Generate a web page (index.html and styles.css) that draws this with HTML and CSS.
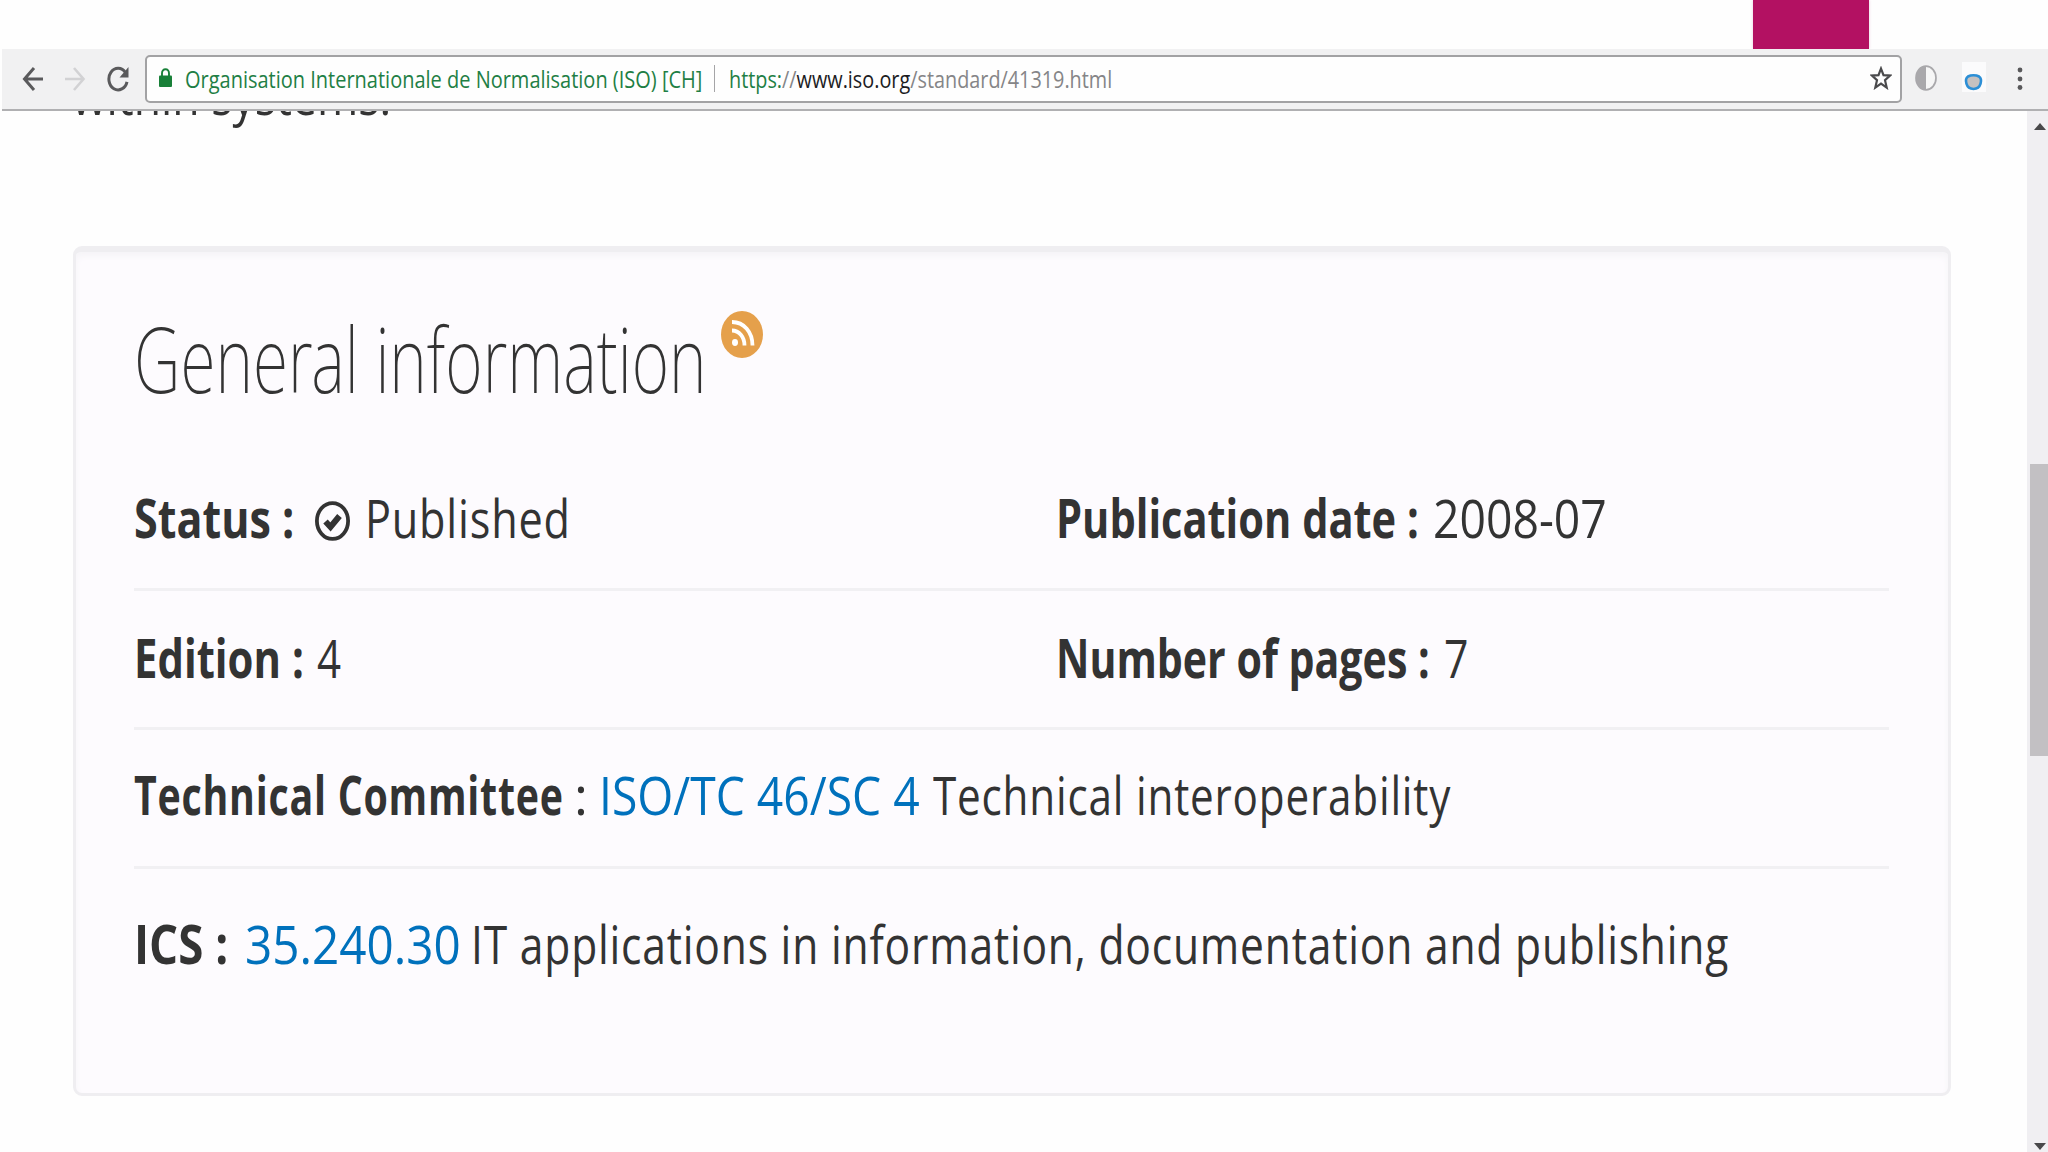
FILE: index.html
```html
<!DOCTYPE html>
<html lang="en">
<head>
    <meta charset="UTF-8">
    <meta name="viewport" content="width=device-width, initial-scale=1.0">
    <title>ISO - General information</title>
    <link rel="stylesheet" href="styles.css">
</head>
<body>

    <!-- Strip above the browser -->
    <div class="top-strip">
        <div class="accent"></div>
    </div>

    <!-- Browser toolbar -->
    <div class="toolbar">
        <svg class="nav-icon back" viewBox="0 0 22 26" fill="none" stroke="#5a5a5c" stroke-width="3">
            <path d="M21 13H2.5M12 2L2.5 13L12 24"/>
        </svg>
        <svg class="nav-icon forward" viewBox="0 0 22 26" fill="none" stroke="#d2d2d4" stroke-width="2.6">
            <path d="M1 13H19.5M10 2L19.5 13L10 24"/>
        </svg>
        <svg class="nav-icon reload" viewBox="0 0 22 26">
            <path d="M18.4 6.5A9.2 10.8 0 1 0 20 15.8" fill="none" stroke="#5a5a5c" stroke-width="3"/>
            <path d="M21.5 1V11.5H12.5Z" fill="#5a5a5c"/>
        </svg>

        <div class="address">
            <svg class="lock" viewBox="0 0 13 19">
                <path d="M3 9V5.2C3 2.7 4.4 1.2 6.5 1.2S10 2.7 10 5.2V9" fill="none" stroke="#188038" stroke-width="1.9"/>
                <rect x="0" y="7.5" width="13" height="11.5" rx="1" fill="#188038"/>
            </svg>
            <span class="text owner">Organisation Internationale de Normalisation (ISO) [CH]</span>
            <span class="divider"></span>
            <span class="text url"><span class="scheme">https:</span>//<span class="host">www.iso.org</span>/standard/41319.html</span>
            <svg class="star" viewBox="0 0 22 24">
                <path d="M11 2.6L13.5 9.2L20 9.6L15 14.2L16.7 21.6L11 17.6L5.3 21.6L7 14.2L2 9.6L8.5 9.2Z" fill="none" stroke="#4a4a4c" stroke-width="2.2"/>
            </svg>
        </div>

        <svg class="contrast" viewBox="0 0 22 26">
            <ellipse cx="11" cy="13" rx="10" ry="11.8" fill="#f6f6f6" stroke="#a9a8ab" stroke-width="1.7"/>
            <path d="M11 1.2A10 11.8 0 0 0 11 24.8Z" fill="#a9a8ab"/>
        </svg>
        <svg class="extension" viewBox="0 0 24 30">
            <rect width="24" height="30" fill="#fbfbfc"/>
            <path d="M6 14.5C9 12.8 14 12.8 17 14.5C20.5 17 19.5 27 11.5 27S2.5 17 6 14.5Z" fill="#c5c1c0" stroke="#2c8fd6" stroke-width="2.6"/>
        </svg>
        <svg class="menu" viewBox="0 0 6 24" fill="#58585a">
            <circle cx="3" cy="3" r="2.4"/>
            <circle cx="3" cy="12" r="2.4"/>
            <circle cx="3" cy="20.5" r="2.4"/>
        </svg>
    </div>

    <div class="viewport">
        <div class="page">
            <!-- Last line of the abstract, scrolled under the toolbar -->
            <div class="abstract"><span class="text abstract-text">within systems.</span></div>

            <div class="card">
                <div class="card-title">
                    <h2 class="text title">General information</h2>
                    <svg class="rss" viewBox="0 0 42 47">
                        <ellipse cx="21" cy="23.5" rx="21" ry="23.5" fill="#e5a04b"/>
                        <ellipse cx="14" cy="31.5" rx="3" ry="3.4" fill="#fff"/>
                        <path d="M11 19.5C18 19.5 23.5 26 23.5 34.5M11 11C23 11 31.5 21 31.5 34.5" fill="none" stroke="#fff" stroke-width="3.8"/>
                    </svg>
                </div>

                <div class="row row-status">
                    <div class="col">
                        <strong class="text status-label">Status :</strong>
                        <svg class="check" viewBox="0 0 35 40">
                            <ellipse cx="17.5" cy="20" rx="15.6" ry="17.9" fill="none" stroke="#333" stroke-width="3.8"/>
                            <path d="M10.5 20.5L15.5 26L24.5 15" fill="none" stroke="#333" stroke-width="6"/>
                        </svg>
                        <span class="text status-value">Published</span>
                    </div>
                    <div class="col">
                        <strong class="text date-label">Publication date :</strong>
                        <span class="text date-value">2008-07</span>
                    </div>
                </div>

                <div class="row row-edition">
                    <div class="col">
                        <strong class="text edition-label">Edition :</strong>
                        <span class="text edition-value">4</span>
                    </div>
                    <div class="col">
                        <strong class="text pages-label">Number of pages :</strong>
                        <span class="text pages-value">7</span>
                    </div>
                </div>

                <div class="row row-committee">
                    <strong class="text committee-label">Technical Committee</strong>
                    <span class="text committee-colon">:</span>
                    <a class="text committee-link">ISO/TC 46/SC 4</a>
                    <span class="text committee-value">Technical interoperability</span>
                </div>

                <div class="row row-ics">
                    <strong class="text ics-label">ICS :</strong>
                    <a class="text ics-link">35.240.30</a>
                    <span class="text ics-value">IT applications in information, documentation and publishing</span>
                </div>
            </div>
        </div>

        <div class="scrollbar">
            <div class="arrow-up"></div>
            <div class="thumb"></div>
            <div class="arrow-down"></div>
        </div>
    </div>

</body>
</html>
```
FILE: styles.css
```css
* {
    box-sizing: border-box;
}

body {
    margin: 0;
    height: 1152px;
    display: flex;
    flex-direction: column;
    overflow: hidden;
    background-color: #fefefe;
    color: #333;
    font-family: "Open Sans", "Noto Sans", sans-serif;
}

svg {
    display: block;
    flex: none;
}

/* Every label is squeezed horizontally, the width is the slot it takes in the row */
.text {
    display: block;
    flex: none;
    white-space: nowrap;
    transform-origin: 0 0;
}

/* Strip above the browser */
.top-strip {
    flex: none;
    height: 49px;
    padding-left: 1753px;
}

.accent {
    width: 116px;
    height: 49px;
    background-color: #b31162;
    box-shadow: 0 0 3px #e9cfe0;
}

/* Browser toolbar */
.toolbar {
    flex: none;
    height: 62px;
    margin-left: 2px;
    padding: 6px 0 0 20px;
    display: flex;
    background-color: #f1f1f2;
    border-bottom: 2px solid #b0b0b2;
}

.nav-icon {
    width: 22px;
    height: 26px;
    margin-top: 11px;
}

.forward {
    margin-left: 20px;
}

.reload {
    margin-left: 21px;
}

.address {
    width: 1757px;
    height: 48px;
    margin-left: 16px;
    display: flex;
    border: 2px solid #a2a2a4;
    border-radius: 5px;
    background-color: #fefefe;
    font-size: 23px;
    line-height: 44px;
}

.lock {
    width: 13px;
    height: 19px;
    margin: 11px 0 0 12px;
}

.owner {
    width: 529px;
    margin-left: 13px;
    color: #1f7f45;
    transform: scaleX(0.869);
}

.divider {
    width: 1px;
    height: 27px;
    margin-top: 8px;
    background-color: #a5a5a7;
}

.url {
    width: 1141px;
    margin-left: 14px;
    color: #858587;
    transform: scaleX(0.8615);
}

.scheme {
    color: #1f7f45;
}

.host {
    color: #1c1c1e;
}

.star {
    width: 22px;
    height: 24px;
    margin-top: 9px;
}

.contrast {
    width: 22px;
    height: 26px;
    margin: 10px 0 0 13px;
}

.extension {
    width: 24px;
    height: 30px;
    margin: 7px 0 0 25px;
}

.menu {
    width: 6px;
    height: 24px;
    margin: 12px 0 0 31px;
}

/* Page area */
.viewport {
    flex: 1;
    min-height: 0;
    display: flex;
}

.page {
    width: 2027px;
    overflow: hidden;
}

.abstract {
    display: flex;
    height: 135px;
    padding-left: 72px;
    font-size: 53px;
    line-height: 72px;
}

.abstract-text {
    margin-top: -52px;
    transform: scaleX(0.841);
}

/* Card */
.card {
    width: 1878px;
    height: 850px;
    margin-left: 73px;
    padding: 51px 59px 0 58px;
    border: 3px solid #efeef1;
    border-top-width: 6px;
    border-radius: 9px;
    background-color: #fdfbfe;
    box-shadow: inset 0 4px 6px #f5f4f7;
    font-size: 53px;
    line-height: 72px;
}

.card-title {
    display: flex;
    height: 145px;
}

.title {
    width: 587px;
    margin: 0;
    font-family: "Noto Sans", sans-serif;
    font-size: 91px;
    font-weight: 170;
    line-height: 110px;
    transform: scaleX(0.7065);
}

.rss {
    width: 42px;
    height: 47px;
    margin-top: 8px;
}

.row {
    display: flex;
    width: 1755px;
    border-bottom: 3px solid #f1f0f3;
}

.col {
    display: flex;
    flex: none;
    width: 922px;
}

.row-status {
    height: 143px;
    padding-top: 34px;
}

.row-edition {
    height: 139px;
    padding-top: 31px;
}

.row-committee {
    height: 139px;
    padding-top: 29px;
}

.row-ics {
    height: 109px;
    padding-top: 39px;
    border-bottom: none;
}

.card a {
    color: #0071bc;
}

.status-label {
    width: 181px;
    transform: scaleX(0.8128);
}

.check {
    width: 35px;
    height: 40px;
    margin: 19px 15px 0 0;
}

.status-value {
    letter-spacing: 1px;
    transform: scaleX(0.815);
}

.date-label {
    width: 377px;
    transform: scaleX(0.7842);
}

.date-value {
    transform: scaleX(0.8737);
}

.edition-label {
    width: 183px;
    transform: scaleX(0.7895);
}

.edition-value {
    transform: scaleX(0.7931);
}

.pages-label {
    width: 388px;
    transform: scaleX(0.7757);
}

.pages-value {
    transform: scaleX(0.8077);
}

.committee-label {
    width: 440px;
    letter-spacing: 1px;
    transform: scaleX(0.7425);
}

.committee-colon {
    width: 25px;
}

.committee-link {
    width: 334px;
    transform: scaleX(0.8726);
}

.committee-value {
    letter-spacing: 1px;
    transform: scaleX(0.797);
}

.ics-label {
    width: 111px;
    transform: scaleX(0.8618);
}

.ics-link {
    width: 226px;
    transform: scaleX(0.8996);
}

.ics-value {
    letter-spacing: 1px;
    transform: scaleX(0.8035);
}

/* Scrollbar */
.scrollbar {
    width: 21px;
    display: flex;
    flex-direction: column;
    background-color: #f0eff2;
}

.arrow-up {
    width: 0;
    margin: 12px 0 0 7px;
    border-left: 6px solid transparent;
    border-right: 6px solid transparent;
    border-bottom: 7px solid #48484a;
}

.thumb {
    height: 292px;
    margin: 334px 0 0 3px;
    background-color: #c2c0c3;
}

.arrow-down {
    width: 0;
    margin: auto 0 2px 7px;
    border-left: 6px solid transparent;
    border-right: 6px solid transparent;
    border-top: 7px solid #48484a;
}
```
